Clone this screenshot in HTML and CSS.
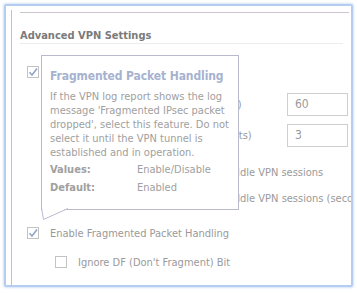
FILE: index.html
```html
<!DOCTYPE html>
<html>
<head>
<meta charset="utf-8">
<link rel="stylesheet" href="styles.css">
</head>
<body>
<div class="frame">
  <div class="panel">
    <div class="topline"></div>
    <h2 class="heading">Advanced VPN Settings</h2>
    <div class="sep"></div>
    <div class="row r1"><span class="cb on"><svg viewBox="0 0 12 12" width="12" height="12"><path d="M2.5 6.2 L5 9 L10 2.5" fill="none" stroke="#8fa6c6" stroke-width="1.6"/></svg></span><span class="lbl">Enable IKE Dead Peer Detection</span></div>
    <div class="row field r2"><span class="lbl l2">Dead Peer Detection Interval (seconds)</span><span class="input">60</span></div>
    <div class="row field r3"><span class="lbl">Failure Trigger Level (missed heartbeats)</span><span class="input">3</span></div>
    <div class="row sub r4"><span class="cb on"><svg viewBox="0 0 12 12" width="12" height="12"><path d="M2.5 6.2 L5 9 L10 2.5" fill="none" stroke="#8fa6c6" stroke-width="1.6"/></svg></span><span class="lbl">Enable Dead Peer Detection for Idle VPN sessions</span></div>
    <div class="row sub r5"><span class="lbl nocb">Dead Peer Detection Interval for Idle VPN sessions (seconds)</span></div>
    <div class="row r6"><span class="cb on"><svg viewBox="0 0 12 12" width="12" height="12"><path d="M2.5 6.2 L5 9 L10 2.5" fill="none" stroke="#8fa6c6" stroke-width="1.6"/></svg></span><span class="lbl">Enable Fragmented Packet Handling</span></div>
    <div class="row sub r7"><span class="cb"></span><span class="lbl">Ignore DF (Don't Fragment) Bit</span></div>

    <div class="tooltip">
      <div class="tt-title">Fragmented Packet Handling</div>
      <p class="tt-text">If the VPN log report shows the log message 'Fragmented IPsec packet dropped', select this feature. Do not select it until the VPN tunnel is established and in operation.</p>
      <div class="tt-kv"><span class="tt-k">Values:</span><span class="tt-v">Enable/Disable</span></div>
      <div class="tt-kv"><span class="tt-k">Default:</span><span class="tt-v">Enabled</span></div>
      <svg class="tail" width="30" height="14" viewBox="0 0 30 14"><polygon points="1,0 3,11.5 27,0" fill="#fff"/><polyline points="0.5,0 2.5,11.5 27,0.5" fill="none" stroke="#babacd" stroke-width="1"/></svg>
    </div>
  </div>
</div>
</body>
</html>
```

FILE: styles.css
```css
html, body {
  margin: 0;
  padding: 0;
  background: #fff;
}
body {
  font-family: "DejaVu Sans Condensed", "DejaVu Sans", sans-serif;
  font-size: 11px;
  color: #9a9a9a;
}
.frame {
  margin: 4px;
  width: 349px;
  height: 283px;
  box-sizing: border-box;
  border: 2px solid #b4cdf0;
  border-radius: 2px;
  box-shadow: 0 0 2px 1px #d6e4f8;
  padding: 4px 0 0 5px;
}
.panel {
  position: relative;
  height: 275px;
  border-left: 1px solid #c4c0c8;
  overflow: hidden;
}
.topline {
  margin: 2px 2px 0 8px;
  height: 1px;
  background: #cdc5cd;
}
.heading {
  margin: 16px 0 0 8px;
  font-size: 11px;
  line-height: 14px;
  font-weight: bold;
  color: #7a7a7a;
}
.sep {
  margin: 0 8px 0 8px;
  height: 1px;
  background: #ececec;
}
.row {
  display: flex;
  align-items: center;
  height: 24px;
  padding-left: 15px;
  white-space: nowrap;
}
.row.sub { padding-left: 43px; }
.row.field { height: 23px; padding-right: 3px; }
.field .lbl { flex: 1; margin-left: 23px; }
.field .l2 { margin-left: 20px; }
.r1 { margin-top: 16px; }
.r2 { margin-top: 9px; }
.r3 { margin-top: 8px; }
.r4 { margin-top: 13px; }
.r5 { margin-top: 2px; }
.r6 { margin-top: 11px; }
.r7 { margin-top: 5px; }
.cb {
  flex: none;
  width: 12px;
  height: 12px;
  box-sizing: border-box;
  border: 1px solid #c3c3c3;
  background: #fff;
  display: flex;
  align-items: center;
  justify-content: center;
}
.cb svg { display: block; flex: none; }
.cb + .lbl { margin-left: 11px; }
.nocb { margin-left: 19px; }
.input {
  flex: none;
  width: 61px;
  height: 23px;
  box-sizing: border-box;
  border: 1px solid #cfcfcf;
  padding-left: 7px;
  font-size: 12px;
  line-height: 21px;
  color: #9a9a9a;
}
.tooltip {
  position: absolute;
  left: 29px;
  top: 45px;
  width: 198px;
  height: 155px;
  box-sizing: border-box;
  border: 1px solid #babacd;
  background: #fff;
  padding: 12px 6px 0 8px;
}
.tt-title {
  font-weight: bold;
  font-size: 12px;
  letter-spacing: -0.1px;
  line-height: 16px;
  white-space: nowrap;
  color: #a6b2cf;
}
.tt-text {
  margin: 6px 0 0 0;
  line-height: 14px;
  color: #a0a0a0;
}
.tt-kv {
  display: flex;
  height: 18px;
  align-items: center;
  color: #a0a0a0;
}
.tt-kv:first-of-type { margin-top: 2px; }
.tt-k {
  width: 87px;
  font-weight: bold;
}
.tail {
  position: absolute;
  left: -1px;
  top: 100%;
  margin-top: -1px;
}
```
